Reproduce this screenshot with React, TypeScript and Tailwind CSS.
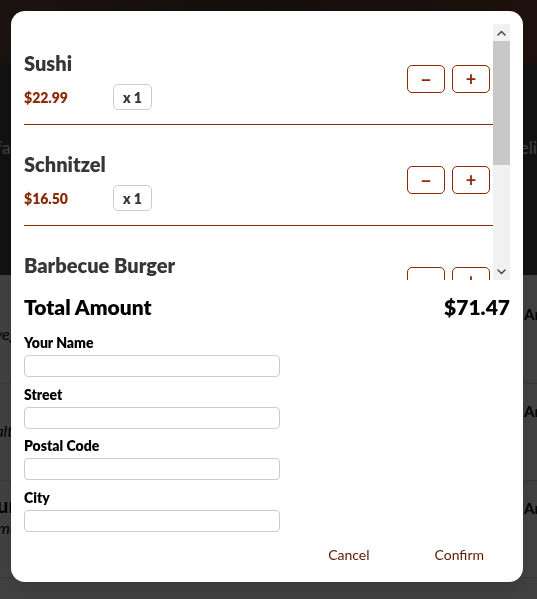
import React, { useState } from "react";

type CartItem = { id: string; name: string; price: number; amount: number };

const initialItems: CartItem[] = [
  { id: "m1", name: "Sushi", price: 22.99, amount: 1 },
  { id: "m2", name: "Schnitzel", price: 16.5, amount: 1 },
  { id: "m3", name: "Barbecue Burger", price: 12.99, amount: 1 },
  { id: "m4", name: "Green Bowl", price: 18.99, amount: 1 },
];

const meals = [
  { name: "Sushi", description: "Finest fish and veggies", price: "$22.99" },
  { name: "Schnitzel", description: "A german specialty!", price: "$16.50" },
  { name: "Barbecue Burger", description: "American, raw, meaty", price: "$12.99" },
  { name: "Green Bowl", description: "Healthy...and green...", price: "$18.99" },
];

function MealRow({ meal }: { meal: (typeof meals)[number] }) {
  return (
    <li className="flex h-[97px] justify-between border-b border-[#d8d8d8] pt-[12px]">
      <div>
        <h3 className="text-[20px] font-bold leading-[24px] text-black">{meal.name}</h3>
        <div className="text-[16px] italic leading-[22px] text-black">{meal.description}</div>
        <div className="text-[18px] font-bold leading-[24px] text-[#ad5502]">{meal.price}</div>
      </div>
      <div className="w-[118px] pt-[4px]">
        <div className="flex items-center gap-2">
          <span className="text-[15px] font-bold leading-[20px] text-black">Amount</span>
          <span className="h-[22px] w-[40px] rounded border border-[#ccc]" />
        </div>
      </div>
    </li>
  );
}

function CartRow({
  item,
  onAdd,
  onRemove,
}: {
  item: CartItem;
  onAdd: () => void;
  onRemove: () => void;
}) {
  return (
    <li className="flex items-center justify-between border-b border-[#8a2b06] pb-[14px] pt-[24px]">
      <div>
        <h2 className="text-[20px] font-extrabold leading-[30px] text-[#363636]">{item.name}</h2>
        <div className="mt-[6px] flex items-center">
          <span className="w-[89px] text-[14px] font-extrabold text-[#8a2b06]">${item.price.toFixed(2)}</span>
          <span className="flex h-[26px] w-[39px] items-center justify-center rounded-[5px] border border-[#ccc] text-[14px] font-extrabold text-[#363636]">
            x {item.amount}
          </span>
        </div>
      </div>
      <div className="mr-[3px] flex gap-[7px]">
        <button
          onClick={onRemove}
          className="flex h-[28px] w-[38px] items-center justify-center rounded-[5px] border border-[#8a2b06] text-[19px] font-bold leading-none text-[#8a2b06]"
        >
          −
        </button>
        <button
          onClick={onAdd}
          className="flex h-[28px] w-[38px] items-center justify-center rounded-[5px] border border-[#8a2b06] text-[18px] font-bold leading-none text-[#8a2b06]"
        >
          +
        </button>
      </div>
    </li>
  );
}

function Chevron({ up }: { up?: boolean }) {
  return (
    <svg width="9" height="6" viewBox="0 0 9 6" fill="none">
      <polyline
        points={up ? "1,5 4.5,1.5 8,5" : "1,1 4.5,4.5 8,1"}
        stroke="#505050"
        strokeWidth="1.6"
        strokeLinecap="round"
        strokeLinejoin="round"
      />
    </svg>
  );
}

function Field({ label }: { label: string }) {
  return (
    <div className="mb-[8px]">
      <label className="block text-[14px] font-extrabold leading-[18px] text-black">{label}</label>
      <input type="text" className="mt-[3px] h-[22px] w-[256px] rounded-[4px] border border-[#ccc] px-1 text-[14px]" />
    </div>
  );
}

export default function App() {
  const [items, setItems] = useState<CartItem[]>(initialItems);
  const [scrollRatio, setScrollRatio] = useState(0);

  const total = items.reduce((sum, i) => sum + i.price * i.amount, 0);

  const changeAmount = (id: string, delta: number) => {
    setItems((prev) =>
      prev
        .map((i) => (i.id === id ? { ...i, amount: i.amount + delta } : i))
        .filter((i) => i.amount > 0)
    );
  };

  const handleScroll = (e: React.UIEvent<HTMLUListElement>) => {
    const el = e.currentTarget;
    const max = el.scrollHeight - el.clientHeight;
    setScrollRatio(max > 0 ? el.scrollTop / max : 0);
  };

  return (
    <div className="relative h-[599px] overflow-hidden bg-white" style={{ fontFamily: "Lato, 'Liberation Sans', sans-serif" }}>
      {/* page behind the modal */}
      <div className="h-[63px] bg-gradient-to-r from-[#6a4a3c] via-[#4e3a30] to-[#7a4234]" />
      <section className="flex h-[212px] justify-center overflow-hidden bg-[#444]">
        <p className="mt-[72px] w-[760px] shrink-0 text-center text-[17px] leading-[26px] text-white">
          Choose your favorite meal from our broad selection of available meals and enjoy a delicious lunch at house.
        </p>
      </section>
      <div className="flex justify-center overflow-hidden">
        <ul className="w-[779px] shrink-0 bg-white px-4 pt-[12px]">
          {meals.map((m) => (
            <MealRow key={m.name} meal={m} />
          ))}
        </ul>
      </div>

      {/* backdrop */}
      <div className="fixed inset-0 bg-black/75" />

      {/* cart modal */}
      <div className="fixed left-[11px] top-[11px] w-[512px] rounded-[14px] bg-white p-[13px] shadow-lg">
        <div className="flex h-[256px]">
          <ul
            onScroll={handleScroll}
            className="h-full flex-1 overflow-y-auto [scrollbar-width:none] [&::-webkit-scrollbar]:hidden"
          >
            {items.map((item) => (
              <CartRow
                key={item.id}
                item={item}
                onAdd={() => changeAmount(item.id, 1)}
                onRemove={() => changeAmount(item.id, -1)}
              />
            ))}
          </ul>
          <div className="flex w-[17px] flex-col bg-[#f1f1f1]">
            <div className="flex h-[17px] items-center justify-center">
              <Chevron up />
            </div>
            <div className="flex-1">
              <div className="h-[124px] bg-[#c8c8c8]" style={{ marginTop: `${scrollRatio * 98}px` }} />
            </div>
            <div className="flex h-[17px] items-center justify-center">
              <Chevron />
            </div>
          </div>
        </div>
        <div className="flex h-[54px] items-center justify-between text-[21px] font-extrabold text-black">
          <span>Total Amount</span>
          <span>${total.toFixed(2)}</span>
        </div>
        <form>
          <Field label="Your Name" />
          <Field label="Street" />
          <Field label="Postal Code" />
          <Field label="City" />
          <div className="mt-[3px] flex justify-end gap-[13px]">
            <button type="button" className="h-[29px] px-[26px] text-[14px] text-[#5a1a01]">
              Cancel
            </button>
            <button type="button" className="h-[29px] px-[26px] text-[14px] text-[#5a1a01]">
              Confirm
            </button>
          </div>
        </form>
      </div>
    </div>
  );
}
